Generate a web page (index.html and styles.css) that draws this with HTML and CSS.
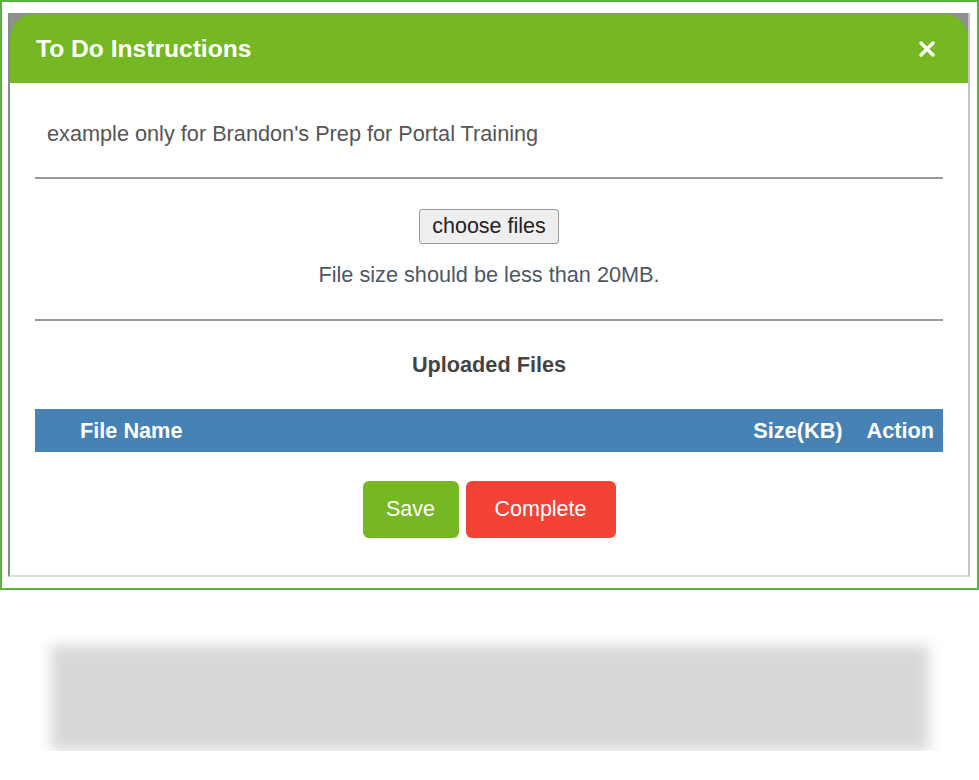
FILE: index.html
```html
<!DOCTYPE html>
<html>
<head>
<meta charset="utf-8">
<link rel="stylesheet" href="styles.css">
</head>
<body>
<div class="frame">
  <div class="modal">
    <div class="modal-header">
      <h1 class="modal-title">To Do Instructions</h1>
      <button class="close" aria-label="Close">
        <svg width="16" height="16" viewBox="0 0 16 16"><path d="M2 2 L14 14 M14 2 L2 14" stroke="#fff" stroke-width="3.4" stroke-linecap="round"/></svg>
      </button>
    </div>
    <div class="modal-body">
      <p class="instructions">example only for Brandon's Prep for Portal Training</p>
      <hr class="divider">
      <div class="upload">
        <button class="choose">choose files</button>
        <p class="hint">File size should be less than 20MB.</p>
      </div>
      <hr class="divider">
      <h2 class="uploaded">Uploaded Files</h2>
      <div class="table-head">
        <span class="col-name">File Name</span>
        <span class="col-size">Size(KB)</span>
        <span class="col-action">Action</span>
      </div>
      <div class="actions">
        <button class="btn btn-save">Save</button>
        <button class="btn btn-complete">Complete</button>
      </div>
    </div>
  </div>
</div>
<div class="blurred"></div>
</body>
</html>
```

FILE: styles.css
```css
* { box-sizing: border-box; }
body {
  margin: 0;
  background: #fff;
  font-family: "Liberation Sans", Arial, sans-serif;
}
.frame {
  border: 2px solid #5cb33c;
  padding: 11px 7px 9px 6px;
  height: 590px;
}
.modal {
  background: #8f8f8f;
  padding-top: 1px;
  border-left: 2px solid #8a8a8a;
  border-right: 2px solid #c4c4c4;
  border-bottom: 2px solid #dedede;
}
.modal-header {
  background: #75b823;
  border-radius: 24px 24px 0 0;
  height: 69px;
  display: flex;
  align-items: center;
  justify-content: space-between;
  padding: 0 33px 0 26px;
}
.modal-title {
  margin: 0;
  color: #fff;
  font-size: 24.6px;
  font-weight: bold;
}
.close {
  background: none;
  border: 0;
  padding: 0;
  display: flex;
  cursor: pointer;
}
.modal-body {
  background: #fff;
  padding: 38px 25px 37px 25px;
}
.instructions {
  margin: 0 0 30px 12px;
  font-size: 21.7px;
  line-height: 26px;
  color: #555;
}
.divider {
  margin: 0;
  border: 0;
  height: 2px;
  background: #9a9a9e;
}
.upload {
  display: flex;
  flex-direction: column;
  align-items: center;
  padding: 30px 0 31px;
}
.choose {
  font-family: "Liberation Sans", Arial, sans-serif;
  font-size: 21.5px;
  color: #222;
  background: #efefef;
  border: 1.5px solid #9a9a9a;
  border-radius: 3px;
  height: 35px;
  padding: 0 12px;
}
.hint {
  margin: 18px 0 0;
  font-size: 21.7px;
  line-height: 26px;
  color: #4c5864;
}
.uploaded {
  margin: 31px 0 31px;
  text-align: center;
  font-size: 21.7px;
  line-height: 26px;
  color: #444;
}
.table-head {
  display: flex;
  align-items: center;
  height: 43px;
  background: #4682b4;
  color: #fff;
  font-weight: bold;
  font-size: 21.7px;
  padding: 0 9px 0 45px;
}
.col-name { flex: 1; }
.col-size { margin-right: 24px; }
.actions {
  display: flex;
  justify-content: center;
  gap: 7px;
  margin-top: 29px;
}
.btn {
  font-family: "Liberation Sans", Arial, sans-serif;
  font-size: 21.5px;
  color: #fff;
  border: 0;
  border-radius: 6px;
  height: 57px;
}
.btn-save {
  background: #75b823;
  width: 96px;
}
.btn-complete {
  background: #f44336;
  width: 150px;
}
.blurred {
  margin: 55px 50px 0 51px;
  height: 106px;
  background: #d8d8d8;
  filter: blur(7px);
}
```
